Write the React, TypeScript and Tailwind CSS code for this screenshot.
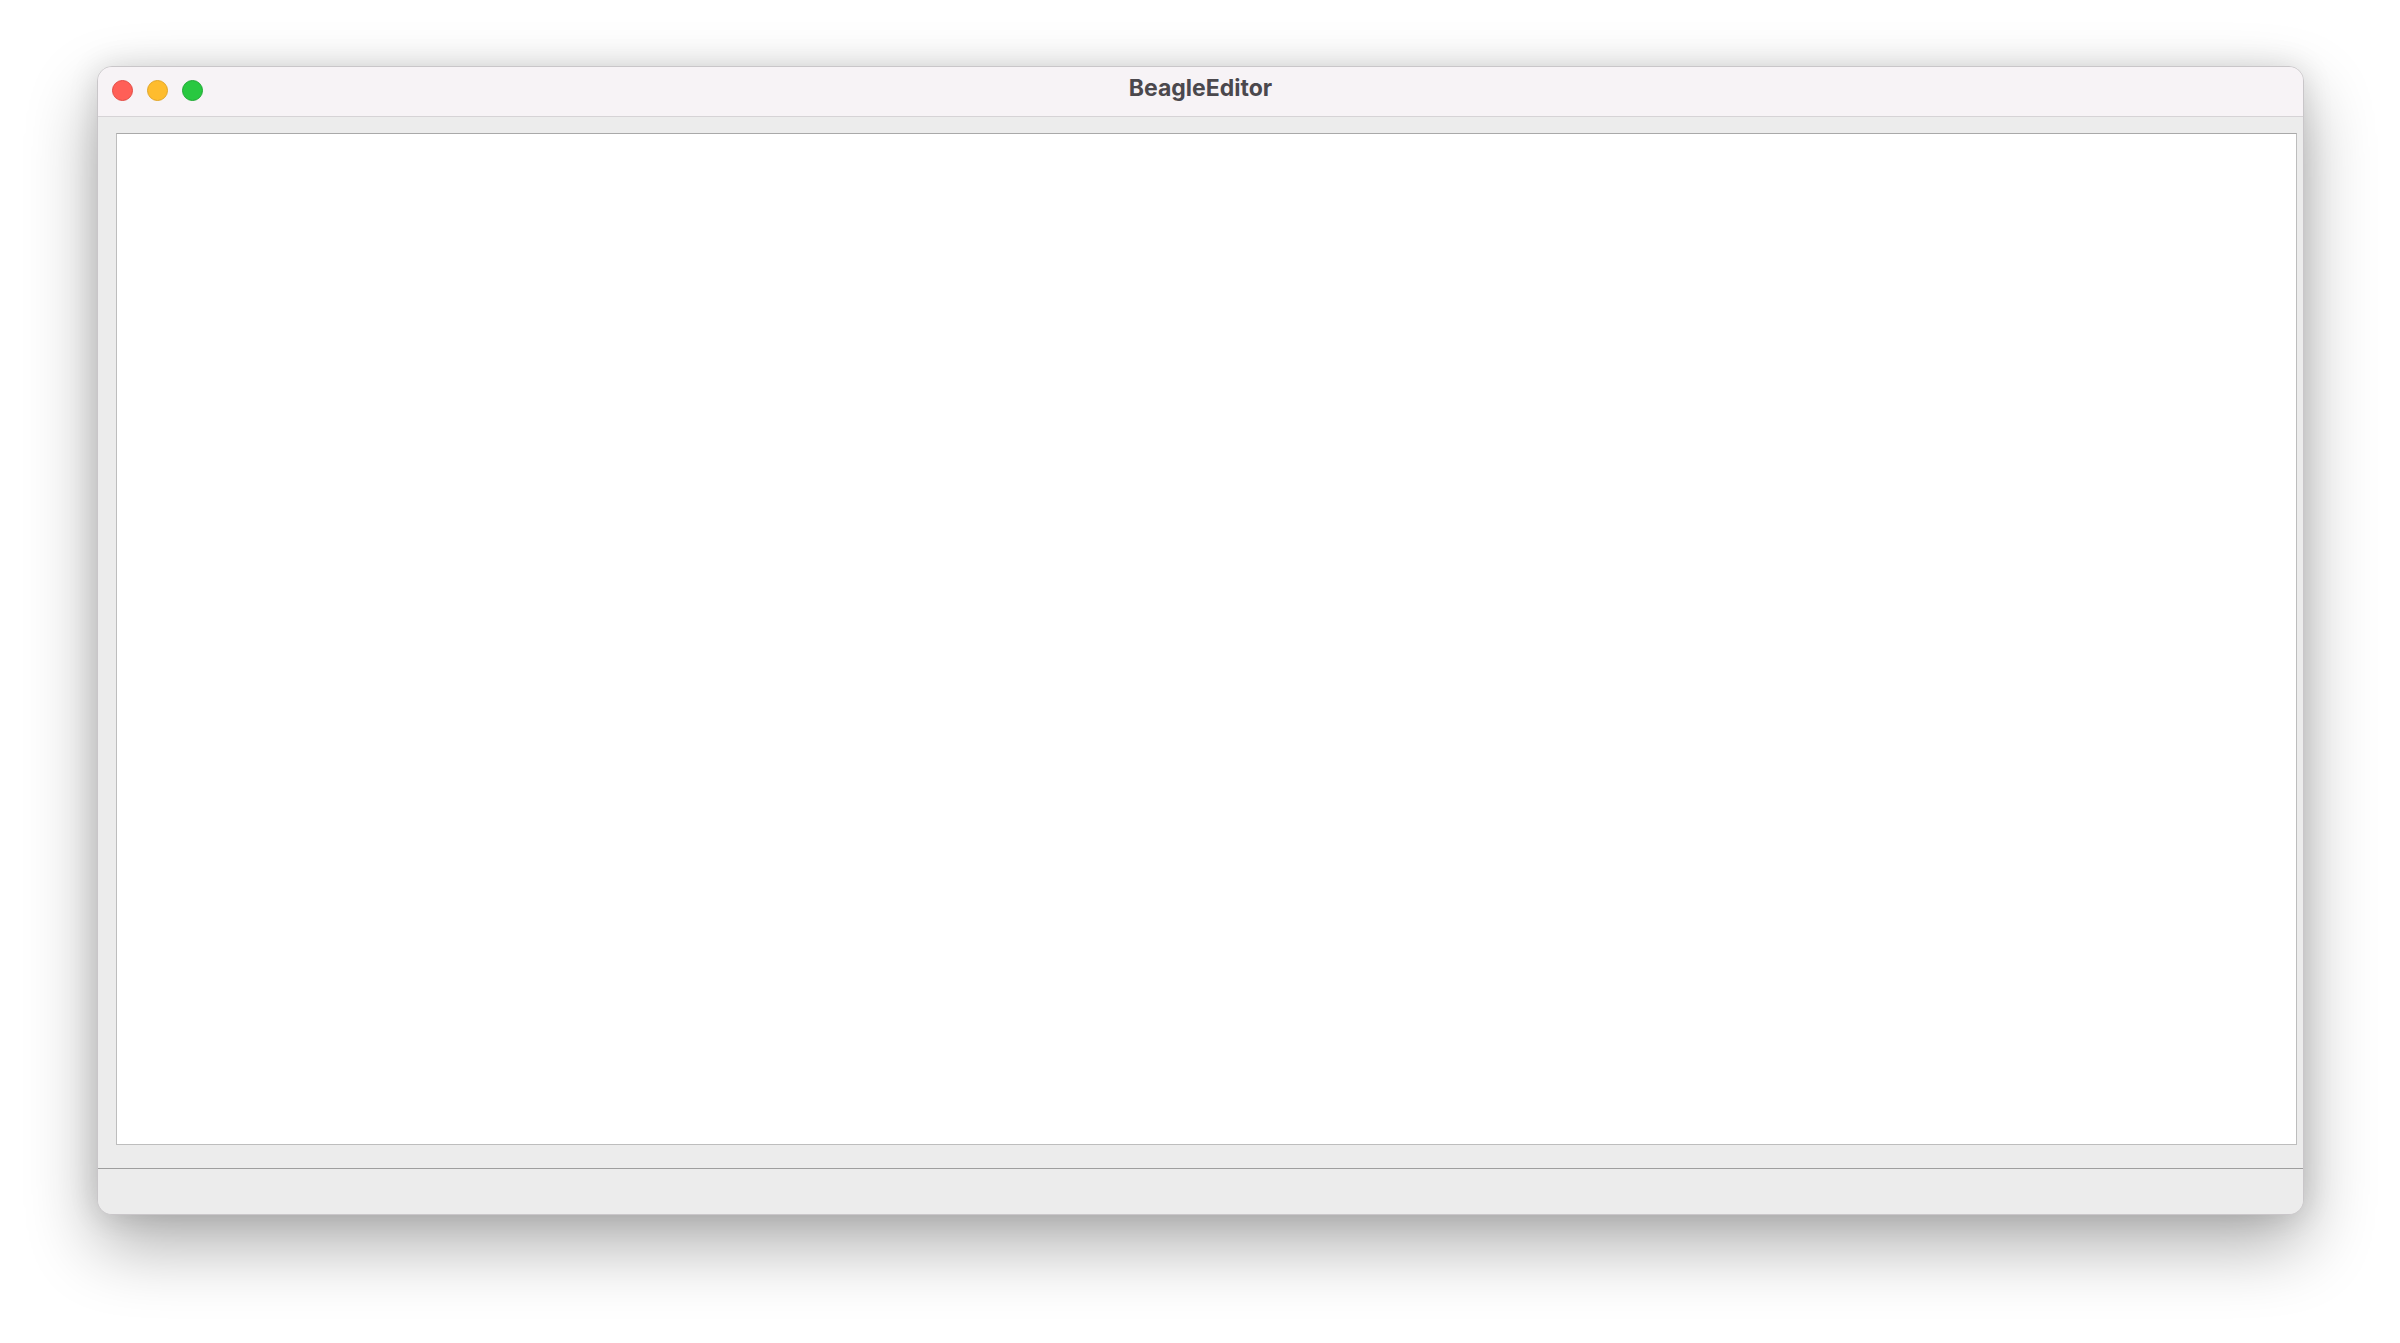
export default function App() {
  return (
    <div className="min-h-screen w-full bg-white pl-[97px] pt-[66px]">
      <div className="flex h-[1149px] w-[2207px] flex-col overflow-hidden rounded-[15px] border border-[#c9c6c9] bg-[#ececec] shadow-[0_30px_70px_rgba(0,0,0,0.32),0_0_30px_rgba(0,0,0,0.12)]">
        {/* title bar */}
        <div className="relative flex h-[50px] shrink-0 items-center border-b border-[#d6d3d6] bg-[#f7f3f6]">
          <div className="flex items-center gap-[14px] pb-[2px] pl-[14px]">
            <span className="h-[21px] w-[21px] rounded-full border border-[#e24a43] bg-[#ff5f57]" />
            <span className="h-[21px] w-[21px] rounded-full border border-[#e0a526] bg-[#febc2e]" />
            <span className="h-[21px] w-[21px] rounded-full border border-[#1ea833] bg-[#28c840]" />
          </div>
          <div className="pointer-events-none absolute inset-0 flex items-center justify-center pb-[7px]">
            <span className="font-['Inter','Liberation_Sans',sans-serif] text-[23px] font-bold text-[#4b484d]">
              BeagleEditor
            </span>
          </div>
        </div>
        {/* content */}
        <div className="flex flex-1 flex-col pl-[18px] pr-[6px] pt-[16px]">
          <div className="h-[1012px] border border-[#bdbdbd] border-t-[#a9a9a9] bg-white" />
        </div>
        {/* status bar */}
        <div className="h-[46px] shrink-0 border-t border-[#9e9e9e] bg-[#ececec]" />
      </div>
    </div>
  );
}
